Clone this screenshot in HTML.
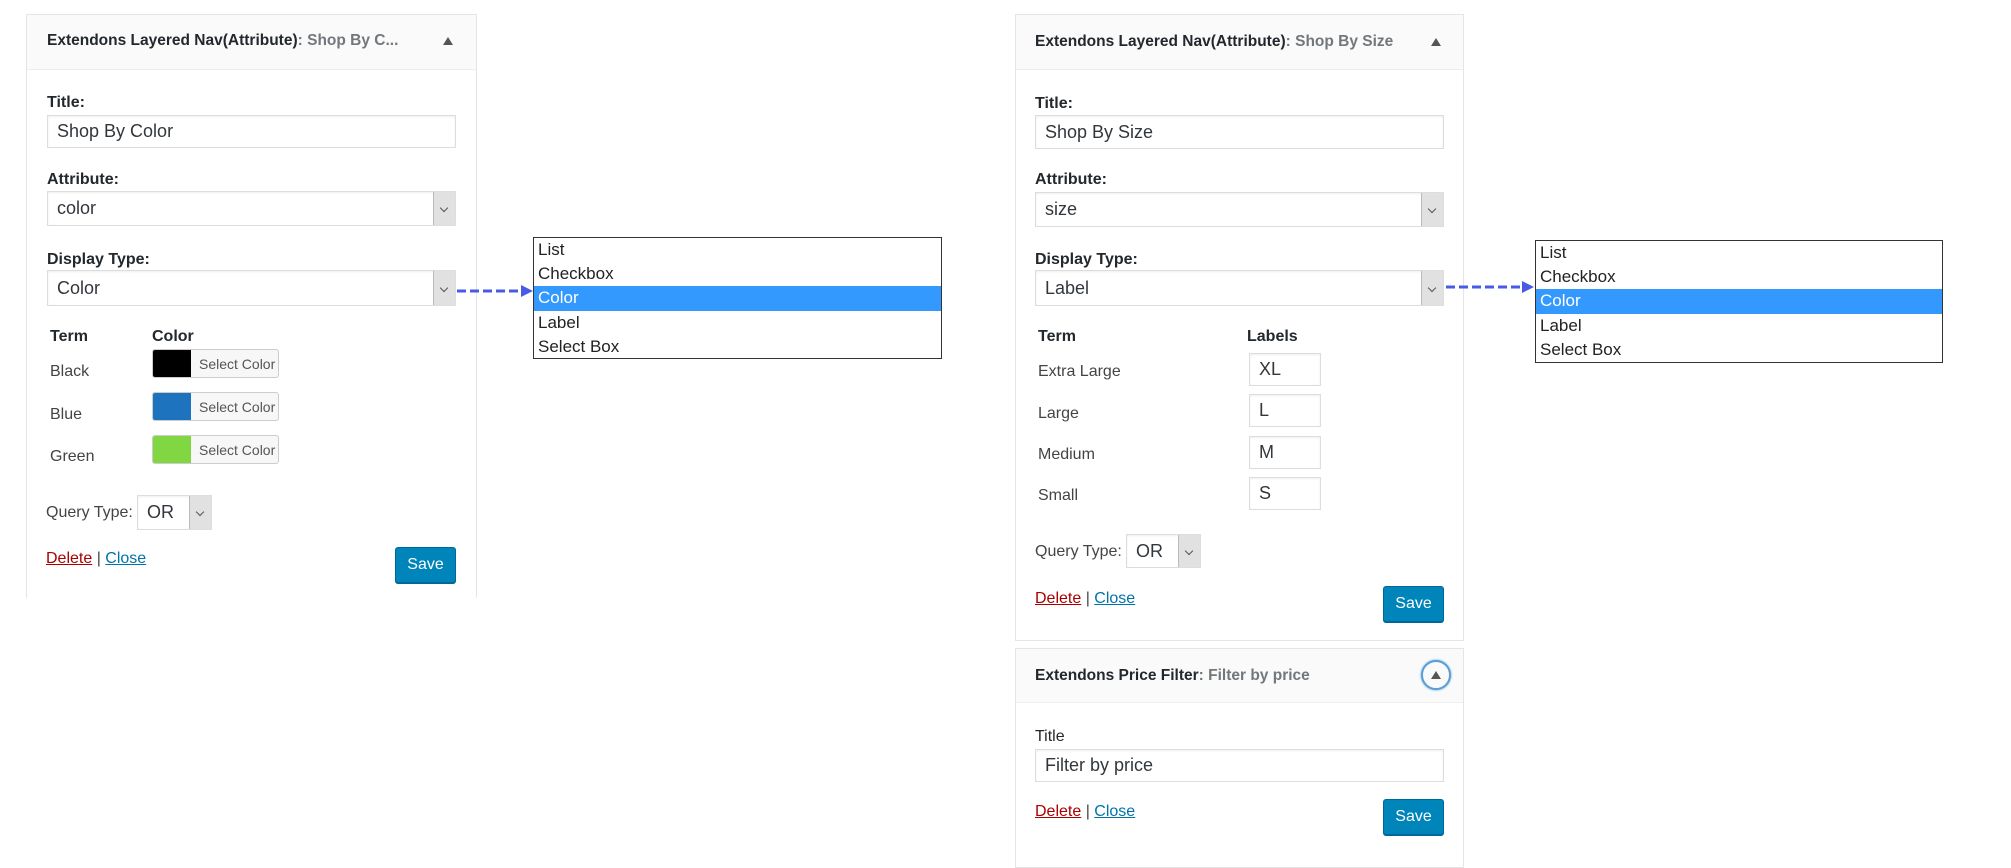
<!DOCTYPE html>
<html><head><meta charset="utf-8"><style>
*{box-sizing:border-box;margin:0;padding:0}
body{width:2011px;height:861px;background:#fff;position:relative;overflow:hidden;font-family:"Liberation Sans",sans-serif;color:#32373c}
.a{position:absolute;white-space:nowrap}
.panel{position:absolute;border:1px solid #e5e5e5;background:#fff}
.hdr{position:absolute;left:0;right:0;top:0;height:55px;background:#fafafa;border-bottom:1px solid #eee}
.ht{font-size:15.5px;font-weight:bold;color:#23282d;line-height:20px}
.ht span{color:#72777c}
.lbl{font-size:16px;font-weight:bold;color:#23282d;line-height:20px}
.inp{position:absolute;border:1px solid #ddd;background:#fff;font-size:18px;color:#32373c;padding-left:9px;box-shadow:inset 0 1px 2px rgba(0,0,0,.07)}
.sel .arr{position:absolute;right:0;top:0;bottom:0;width:22px;background:#e1e1e1;border-left:1px solid #bbb}
.arr:after{content:"";position:absolute;left:7px;top:40%;width:5px;height:5px;border-right:1px solid #555;border-bottom:1px solid #555;transform:rotate(45deg)}
.txt{font-size:16px;color:#444;line-height:20px}
.sw{position:absolute;width:127px;height:29px;border:1px solid #ccc;border-radius:3px;background:#f7f7f7;overflow:hidden}
.sw i{position:absolute;left:0;top:0;bottom:0;width:38px}
.sw b{position:absolute;left:46px;top:6px;font-weight:normal;font-size:14px;color:#555}
.save{position:absolute;background:#0085ba;border:1px solid #006799;border-radius:3px;color:#fff;font-size:16px;text-align:center;box-shadow:0 1px 0 #006799}
.links{font-size:16px;line-height:20px;color:#444}
.links .d{color:#a00;text-decoration:underline}
.links .c{color:#0073aa;text-decoration:underline}
.list{position:absolute;border:1px solid #333;background:#fff;font-size:17px;color:#222}
.list div{height:24.2px;line-height:24px;padding-left:4px}
.list .hl{background:#3399ff;color:#fff}
.tri{position:absolute;width:0;height:0;border-left:5px solid transparent;border-right:5px solid transparent;border-bottom:8px solid #555}
</style></head><body>

<!-- LEFT PANEL -->
<div class="panel" style="left:26px;top:14px;width:451px;height:584px;border-bottom:none">
 <div class="hdr"></div>
</div>
<div class="a ht" style="left:47px;top:31px">Extendons Layered Nav(Attribute)<span>: Shop By C...</span></div>
<div class="tri" style="left:443px;top:37px"></div>
<div class="a lbl" style="left:47px;top:93px">Title:</div>
<div class="inp" style="left:47px;top:115px;width:409px;height:33px;line-height:31px">Shop By Color</div>
<div class="a lbl" style="left:47px;top:170px">Attribute:</div>
<div class="inp sel" style="left:47px;top:191px;width:409px;height:35px;line-height:33px">color<div class="arr"></div></div>
<div class="a lbl" style="left:47px;top:250px">Display Type:</div>
<div class="inp sel" style="left:47px;top:270px;width:409px;height:36px;line-height:34px">Color<div class="arr"></div></div>
<div class="a lbl" style="left:50px;top:327px">Term</div>
<div class="a lbl" style="left:152px;top:327px">Color</div>
<div class="a txt" style="left:50px;top:362px">Black</div>
<div class="a txt" style="left:50px;top:405px">Blue</div>
<div class="a txt" style="left:50px;top:447px">Green</div>
<div class="sw" style="left:152px;top:349px"><i style="background:#000"></i><b>Select Color</b></div>
<div class="sw" style="left:152px;top:392px"><i style="background:#1e73be"></i><b>Select Color</b></div>
<div class="sw" style="left:152px;top:435px"><i style="background:#81d742"></i><b>Select Color</b></div>
<div class="a txt" style="left:46px;top:503px">Query Type:</div>
<div class="inp sel" style="left:137px;top:495px;width:75px;height:35px;line-height:33px">OR<div class="arr"></div></div>
<div class="a links" style="left:46px;top:549px"><span class="d">Delete</span> | <span class="c">Close</span></div>
<div class="save" style="left:395px;top:547px;width:61px;height:36px;line-height:34px">Save</div>

<!-- left arrow -->
<svg class="a" style="left:455px;top:283px" width="80" height="16"><line x1="2" y1="8" x2="66" y2="8" stroke="#4a5ae6" stroke-width="3" stroke-dasharray="9,4"/><polygon points="66,2 78,8 66,14" fill="#4a5ae6"/></svg>
<div class="list" style="left:533px;top:237px;width:409px;height:122px;padding-top:0">
 <div>List</div><div>Checkbox</div><div class="hl">Color</div><div>Label</div><div>Select Box</div>
</div>

<!-- RIGHT PANEL -->
<div class="panel" style="left:1015px;top:14px;width:449px;height:627px">
 <div class="hdr"></div>
</div>
<div class="a ht" style="left:1035px;top:32px">Extendons Layered Nav(Attribute)<span>: Shop By Size</span></div>
<div class="tri" style="left:1431px;top:38px"></div>
<div class="a lbl" style="left:1035px;top:94px">Title:</div>
<div class="inp" style="left:1035px;top:115px;width:409px;height:34px;line-height:32px">Shop By Size</div>
<div class="a lbl" style="left:1035px;top:170px">Attribute:</div>
<div class="inp sel" style="left:1035px;top:192px;width:409px;height:35px;line-height:33px">size<div class="arr"></div></div>
<div class="a lbl" style="left:1035px;top:250px">Display Type:</div>
<div class="inp sel" style="left:1035px;top:270px;width:409px;height:36px;line-height:34px">Label<div class="arr"></div></div>
<div class="a lbl" style="left:1038px;top:327px">Term</div>
<div class="a lbl" style="left:1247px;top:327px">Labels</div>
<div class="a txt" style="left:1038px;top:362px">Extra Large</div>
<div class="a txt" style="left:1038px;top:404px">Large</div>
<div class="a txt" style="left:1038px;top:445px">Medium</div>
<div class="a txt" style="left:1038px;top:486px">Small</div>
<div class="inp" style="left:1249px;top:353px;width:72px;height:33px;line-height:31px">XL</div>
<div class="inp" style="left:1249px;top:394px;width:72px;height:33px;line-height:31px">L</div>
<div class="inp" style="left:1249px;top:436px;width:72px;height:33px;line-height:31px">M</div>
<div class="inp" style="left:1249px;top:477px;width:72px;height:33px;line-height:31px">S</div>
<div class="a txt" style="left:1035px;top:542px">Query Type:</div>
<div class="inp sel" style="left:1126px;top:534px;width:75px;height:34px;line-height:32px">OR<div class="arr"></div></div>
<div class="a links" style="left:1035px;top:589px"><span class="d">Delete</span> | <span class="c">Close</span></div>
<div class="save" style="left:1383px;top:586px;width:61px;height:36px;line-height:34px">Save</div>

<!-- price filter panel -->
<div class="panel" style="left:1015px;top:648px;width:449px;height:220px">
 <div class="hdr" style="height:54px"></div>
</div>
<div class="a ht" style="left:1035px;top:666px">Extendons Price Filter<span>: Filter by price</span></div>
<div class="a" style="left:1421px;top:660px;width:30px;height:30px;border:2px solid #5b9dd9;border-radius:50%;box-shadow:0 0 2px rgba(30,140,190,.8);background:#fafafa"></div>
<div class="tri" style="left:1431px;top:671px"></div>
<div class="a txt" style="left:1035px;top:727px;color:#23282d">Title</div>
<div class="inp" style="left:1035px;top:749px;width:409px;height:33px;line-height:31px">Filter by price</div>
<div class="a links" style="left:1035px;top:802px"><span class="d">Delete</span> | <span class="c">Close</span></div>
<div class="save" style="left:1383px;top:799px;width:61px;height:36px;line-height:34px">Save</div>

<!-- right arrow -->
<svg class="a" style="left:1444px;top:279px" width="92" height="16"><line x1="2" y1="8" x2="78" y2="8" stroke="#4a5ae6" stroke-width="3" stroke-dasharray="9,4"/><polygon points="78,2 90,8 78,14" fill="#4a5ae6"/></svg>
<div class="list" style="left:1535px;top:240px;width:408px;height:123px">
 <div>List</div><div>Checkbox</div><div class="hl">Color</div><div>Label</div><div>Select Box</div>
</div>
</body></html>
